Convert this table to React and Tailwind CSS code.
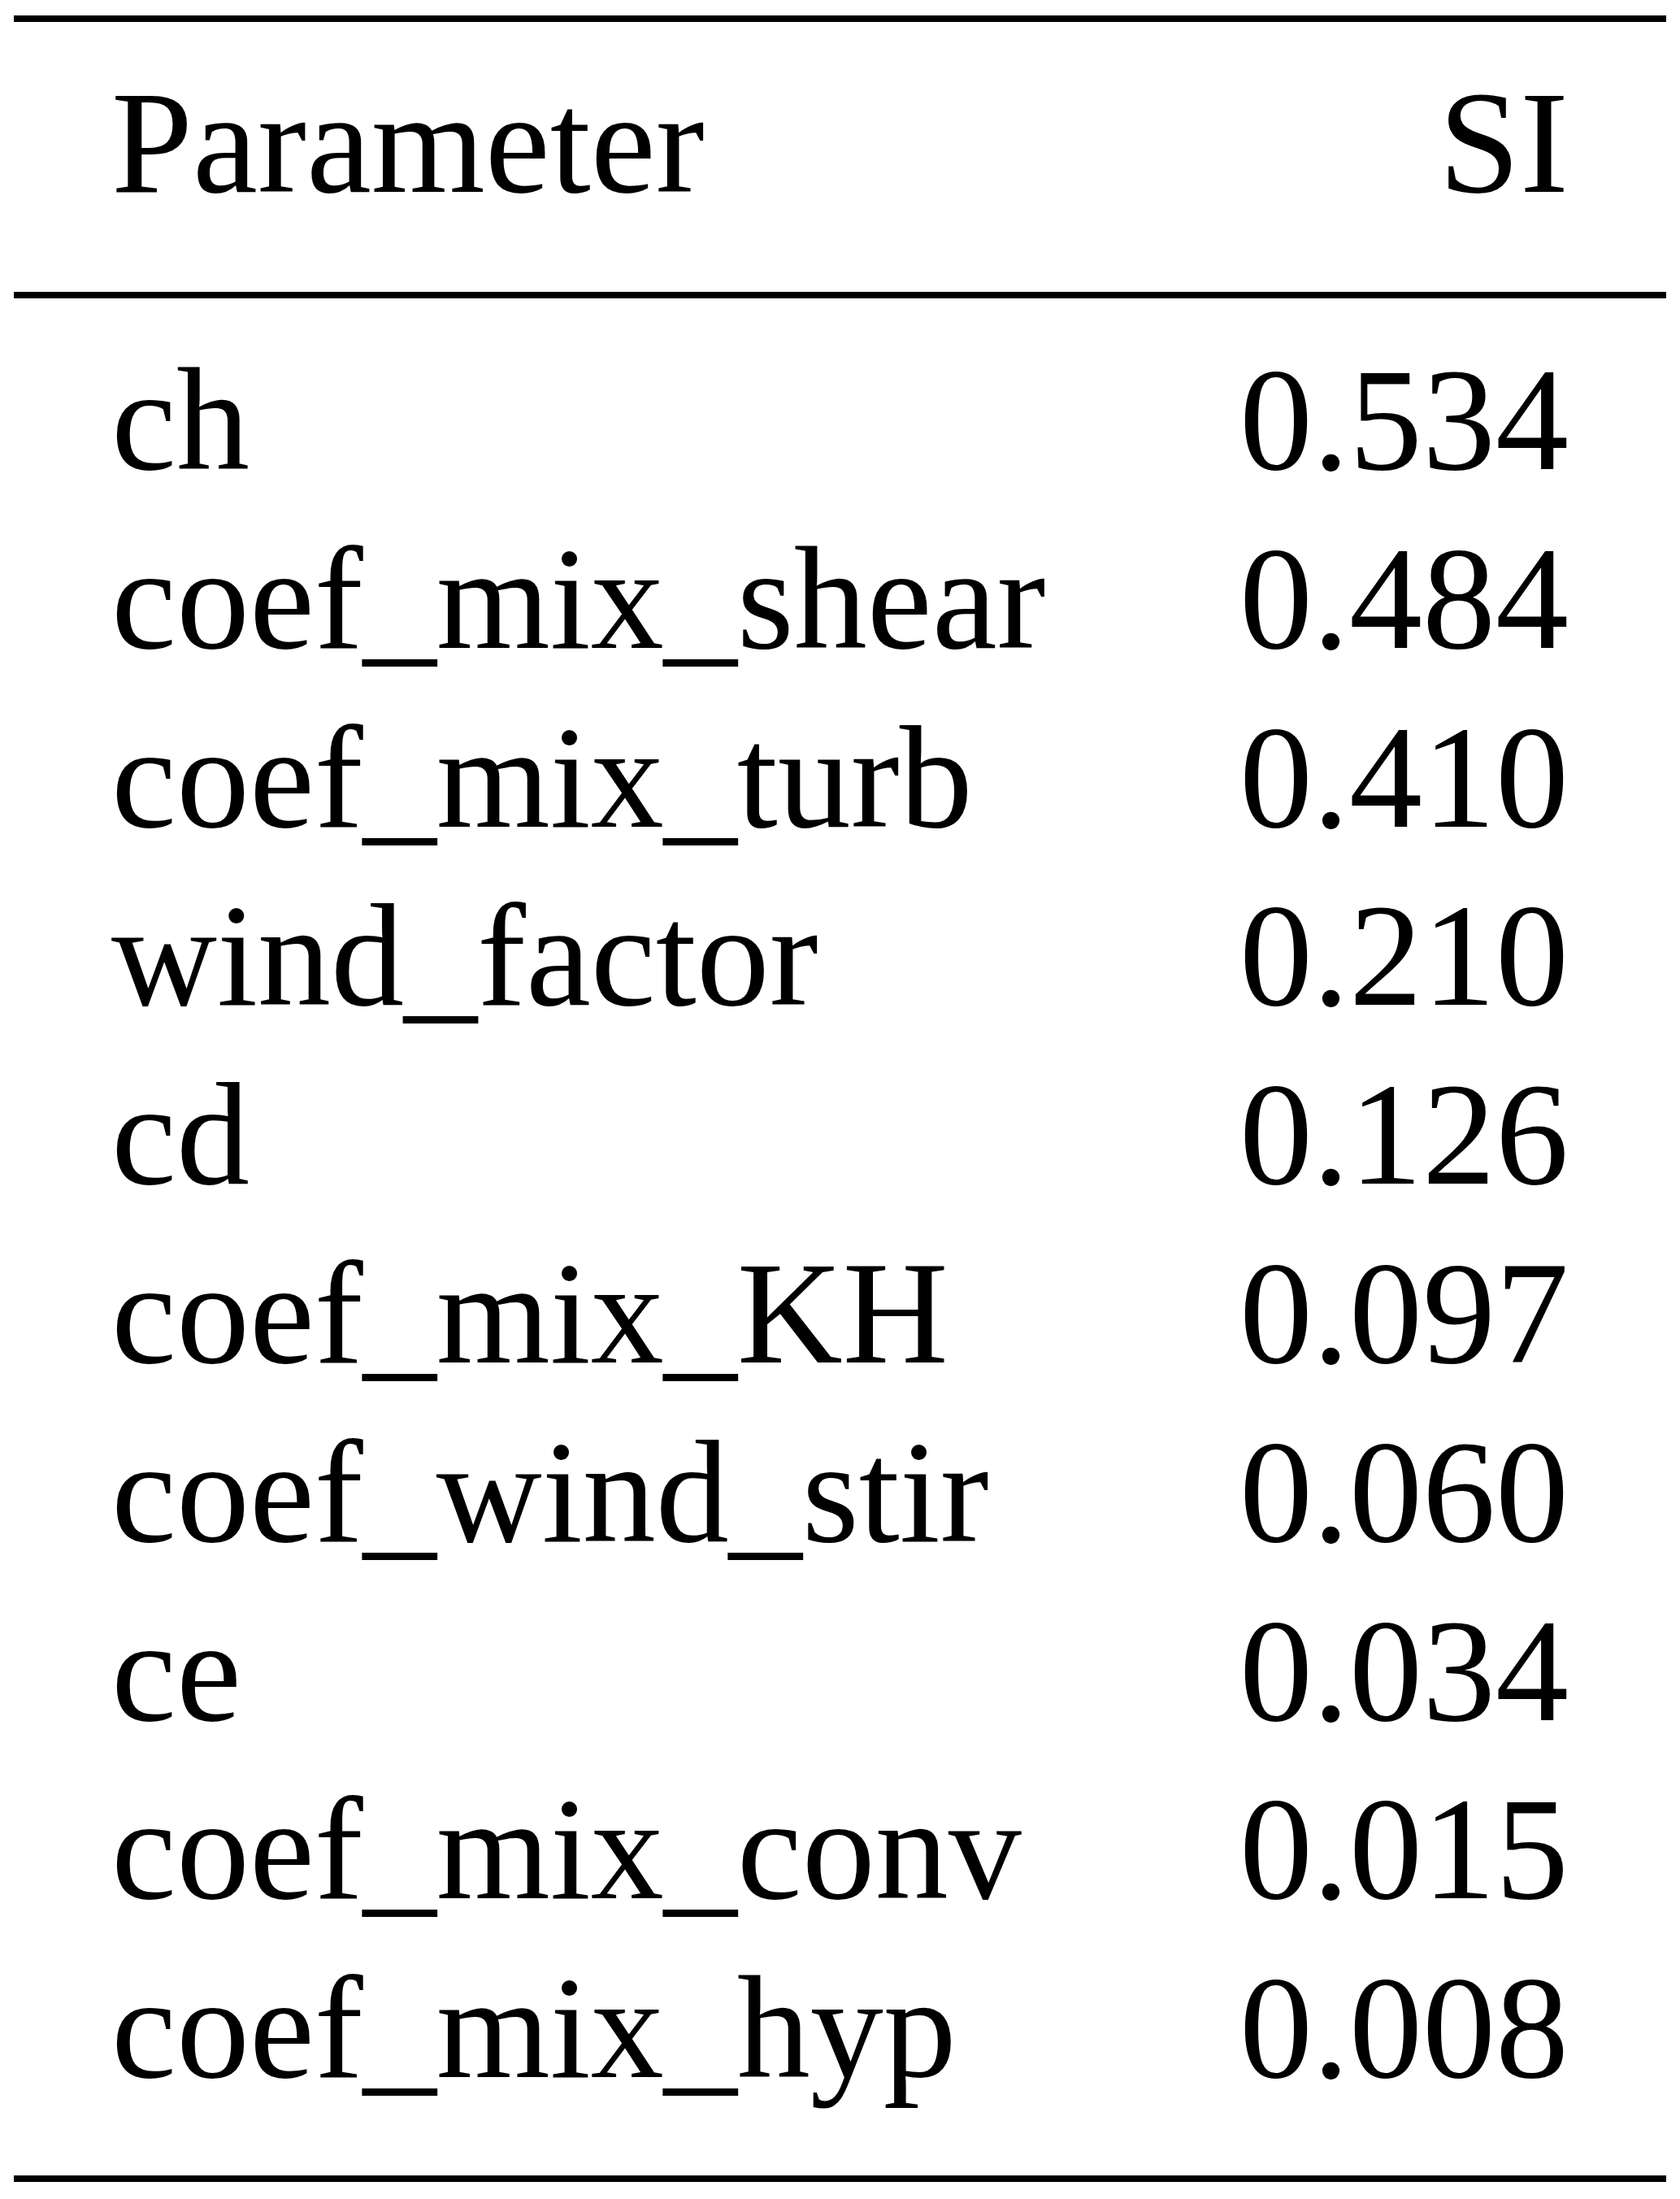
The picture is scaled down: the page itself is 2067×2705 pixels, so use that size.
export default function App() {
  const rows = [
    ["ch", "0.534"],
    ["coef_mix_shear", "0.484"],
    ["coef_mix_turb", "0.410"],
    ["wind_factor", "0.210"],
    ["cd", "0.126"],
    ["coef_mix_KH", "0.097"],
    ["coef_wind_stir", "0.060"],
    ["ce", "0.034"],
    ["coef_mix_conv", "0.015"],
    ["coef_mix_hyp", "0.008"],
  ];
  return (
    <div className="w-[2067px] h-[2705px] bg-white pt-[19px] px-[17px] text-black" style={{ fontFamily: '"Liberation Serif", "Times New Roman", serif' }}>
      <div className="border-t-[8px] border-b-[8px] border-black">
        <div className="flex justify-between px-[120px] pt-[39px] pb-[73px] text-[180px] leading-[220px] border-b-[8px] border-black">
          <span>Parameter</span>
          <span>SI</span>
        </div>
        <div className="px-[120px] pt-[40px] pb-[71px] text-[180px] leading-[219.8px]">
          {rows.map(([p, v]) => (
            <div key={p} className="flex justify-between">
              <span>{p}</span>
              <span>{v}</span>
            </div>
          ))}
        </div>
      </div>
    </div>
  );
}
